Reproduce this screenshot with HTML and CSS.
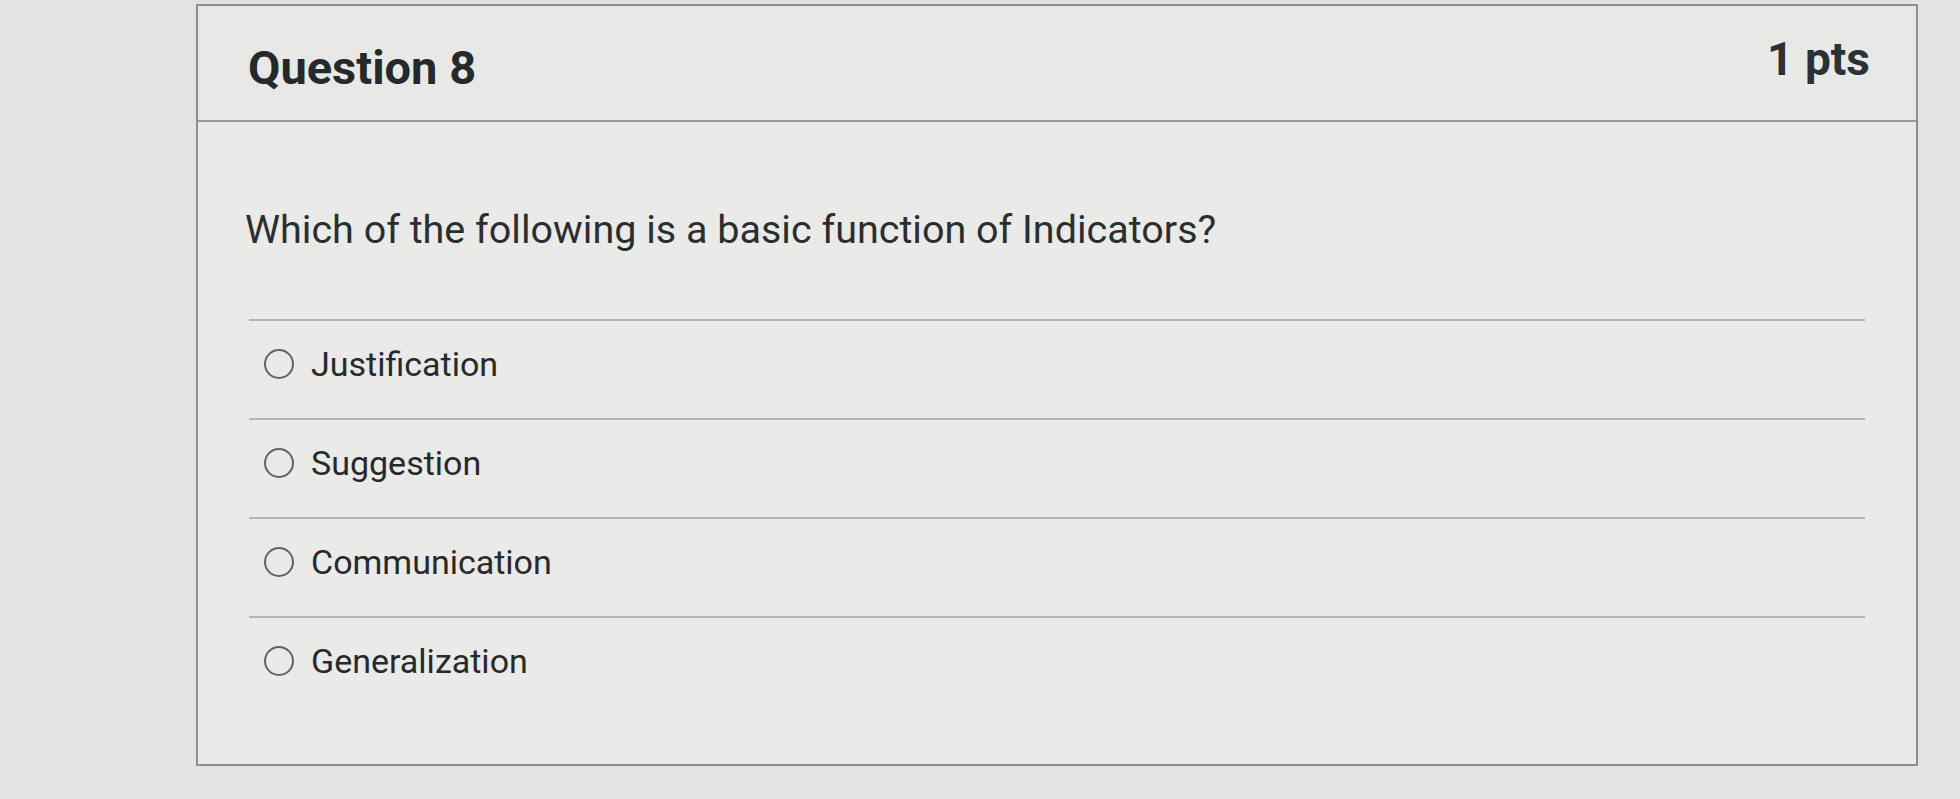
FILE: index.html
```html
<!DOCTYPE html>
<html lang="en">
<head>
<meta charset="utf-8">
<title>Question 8</title>
<link rel="stylesheet" href="styles.css">
</head>
<body>
  <div class="card">
    <div class="header">
      <h2 class="title">Question 8</h2>
      <div class="pts">1 pts</div>
    </div>
    <div class="body">
      <p class="question">Which of the following is a basic function of Indicators?</p>
      <div class="answers">
        <label class="answer"><span class="radio"></span><span class="label">Justification</span></label>
        <label class="answer"><span class="radio"></span><span class="label">Suggestion</span></label>
        <label class="answer"><span class="radio"></span><span class="label">Communication</span></label>
        <label class="answer"><span class="radio"></span><span class="label">Generalization</span></label>
      </div>
    </div>
  </div>
</body>
</html>
```
FILE: styles.css
```css
html, body {
  margin: 0;
  padding: 0;
}
body {
  background: #e3e3e1;
  font-family: Roboto, "Liberation Sans", Arial, sans-serif;
  color: #2b2e31;
  width: 1960px;
  height: 799px;
  overflow: hidden;
}
.card {
  margin: 4px 0 0 196px;
  width: 1718px;
  height: 758px;
  border: 2px solid #8e8e8e;
  background: #eaeae8;
  box-sizing: content-box;
  display: flex;
  flex-direction: column;
}
.header {
  display: flex;
  justify-content: space-between;
  align-items: flex-start;
  padding: 34px 46px 24px 50px;
  border-bottom: 2px solid #979797;
  background: #e8e8e6;
}
.title {
  margin: 0;
  font-size: 47px;
  line-height: 56px;
  font-weight: 700;
  color: #26292c;
}
.pts {
  margin-top: -9px;
  font-size: 46px;
  line-height: 56px;
  font-weight: 700;
  color: #2e3134;
}
.body {
  padding: 84px 51px 0 51px;
}
.question {
  margin: 0 0 65px -4px;
  font-size: 39.5px;
  line-height: 48px;
  font-weight: 400;
  color: #2b2e31;
}
.answers {
  display: flex;
  flex-direction: column;
}
.answer {
  display: flex;
  align-items: center;
  gap: 17px;
  height: 40px;
  padding: 23px 0 34px 15px;
  border-top: 2px solid #b4b4b2;
}
.radio {
  width: 26px;
  height: 26px;
  border: 2px solid #626262;
  border-radius: 50%;
  flex: none;
}
.label {
  font-size: 34px;
  line-height: 40px;
  color: #27292c;
}
```
